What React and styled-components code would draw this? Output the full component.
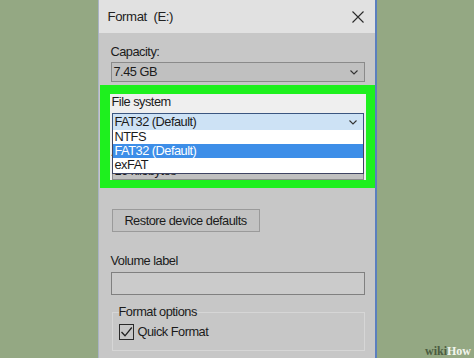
import React from "react";
import styled, { createGlobalStyle } from "styled-components";

const Global = createGlobalStyle`
  html, body { margin: 0; padding: 0; }
  body {
    background: #94a883;
    font-family: "Liberation Sans", Arial, sans-serif;
    color: #1b1b1b;
  }
`;

const Page = styled.div`
  position: relative;
  width: 474px;
  height: 358px;
  overflow: hidden;
  display: flex;
  justify-content: center;
  background: #94a883;
`;

const Dialog = styled.div`
  width: 279px;
  height: 358px;
  box-sizing: border-box;
  display: flex;
  flex-direction: column;
  border-left: 1px solid #a9b3c4;
  border-right: 2px solid #5b7fbe;
  background: #c7c7c7;
  font-size: 12.8px;
  letter-spacing: -0.5px;
  line-height: 16px;
  white-space: nowrap;
`;

const TitleBar = styled.div`
  height: 33px;
  flex: none;
  display: flex;
  align-items: center;
  justify-content: space-between;
  padding: 1px 11px 0 9px;
  box-sizing: border-box;
  background: #e1e1e1;
  font-size: 13.2px;
  letter-spacing: -0.4px;
  color: #222;
`;

const Body = styled.div`
  display: flex;
  flex-direction: column;
  padding-top: 11px;
`;

const Section = styled.div`
  display: flex;
  flex-direction: column;
  align-items: flex-start;
  padding: 0 10px 0 12px;
  margin-top: ${(p) => p.$top || 0}px;
`;

const Label = styled.div`
  height: 16px;
  margin-top: ${(p) => p.$top || 0}px;
`;

const Select = styled.div`
  position: relative;
  align-self: stretch;
  box-sizing: border-box;
  height: 20px;
  margin-top: ${(p) => p.$top ?? 2}px;
  display: flex;
  align-items: center;
  justify-content: space-between;
  padding: 0 6px 0 2px;
  border: 1px solid ${(p) => (p.$focused ? "#3b5680" : "#8a8a8a")};
  background: ${(p) => (p.$focused ? "#cde2f5" : "#c0c0c0")};
`;

const Highlight = styled.div`
  margin: 3px 0 0 1px;
  border: 9px solid #1ef01e;
  border-left-width: 10px;
  border-bottom-width: 8px;
  height: 86px;
  background: #efefef;
  padding: 0 2px 0 2px;
  overflow: hidden;
  display: flex;
  flex-direction: column;
`;

const List = styled.div`
  position: absolute;
  top: 100%;
  left: -1px;
  right: -1px;
  box-sizing: border-box;
  border: 1px solid #3e4462;
  border-top: none;
  padding-bottom: 1px;
  background: #ffffff;
  z-index: 2;
`;

const Option = styled.div`
  height: 14px;
  line-height: 14px;
  padding-left: 2px;
  background: ${(p) => (p.$active ? "#3d8ee8" : "transparent")};
  color: ${(p) => (p.$active ? "#ffffff" : "#1b1b1b")};
`;

const Button = styled.div`
  width: 148px;
  height: 23px;
  box-sizing: border-box;
  margin-left: 1px;
  display: flex;
  align-items: center;
  justify-content: center;
  border: 1px solid #9a9a9a;
  background: #c2c2c2;
`;

const Input = styled.div`
  align-self: stretch;
  height: 23px;
  box-sizing: border-box;
  margin-top: 3px;
  border: 1px solid #808080;
  background: #cbcbcb;
`;

const Group = styled.fieldset`
  align-self: stretch;
  margin: 9px 0 0 1px;
  padding: 4px 0 10px 6px;
  border: 1px solid #d6d6d6;
  min-width: 0;
`;

const Legend = styled.legend`
  padding: 0;
  height: 16px;
`;

const CheckRow = styled.label`
  display: flex;
  align-items: center;
  gap: 4px;
`;

const Box = styled.span`
  width: 15px;
  height: 16px;
  box-sizing: border-box;
  border: 1px solid #2a2a2a;
  display: flex;
  align-items: center;
  justify-content: center;
`;

const Watermark = styled.div`
  position: absolute;
  right: 3px;
  bottom: 1px;
  font-family: "Liberation Serif", "DejaVu Serif", serif;
  font-weight: bold;
  font-size: 12px;
  line-height: 11px;
  color: #4b5c40;
`;

const How = styled.span`
  color: #f2f5ee;
`;

const Chevron = () => (
  <svg width="8" height="5" viewBox="0 0 8 5">
    <path d="M0.5 0.5 L4 4 L7.5 0.5" fill="none" stroke="#333" strokeWidth="1.1" />
  </svg>
);

const Close = () => (
  <svg width="12" height="12" viewBox="0 0 12 12">
    <path d="M0.5 0.5 L11.5 11.5 M11.5 0.5 L0.5 11.5" stroke="#2a2a2a" strokeWidth="1.1" />
  </svg>
);

export default function App() {
  return (
    <Page>
      <Global />
      <Dialog>
        <TitleBar>
          <span>Format&nbsp;&nbsp;(E:)</span>
          <Close />
        </TitleBar>
        <Body>
          <Section>
            <Label>Capacity:</Label>
            <Select>
              <span>7.45 GB</span>
              <Chevron />
            </Select>
          </Section>
          <Highlight>
            <Label>File system</Label>
            <Select $focused $top={3}>
              <span>FAT32 (Default)</span>
              <Chevron />
              <List>
                <Option>NTFS</Option>
                <Option $active>FAT32 (Default)</Option>
                <Option>exFAT</Option>
              </List>
            </Select>
            <Label $top={13}>Allocation unit size</Label>
            <Select>
              <span>16 kilobytes</span>
              <Chevron />
            </Select>
          </Highlight>
          <Section $top={21}>
            <Button>Restore device defaults</Button>
            <Label $top={21}>Volume label</Label>
            <Input />
            <Group>
              <Legend>Format options</Legend>
              <CheckRow>
                <Box>
                  <svg width="13" height="12" viewBox="0 0 13 12">
                    <path d="M1.5 6 L5 9.8 L11.8 1.5" fill="none" stroke="#222" strokeWidth="1.3" />
                  </svg>
                </Box>
                <span>Quick Format</span>
              </CheckRow>
            </Group>
          </Section>
        </Body>
      </Dialog>
      <Watermark>
        wiki<How>How</How>
      </Watermark>
    </Page>
  );
}
